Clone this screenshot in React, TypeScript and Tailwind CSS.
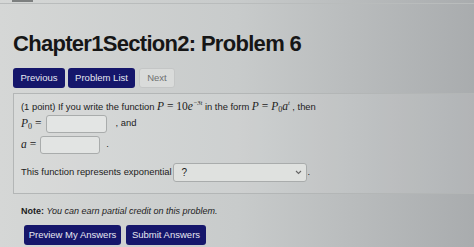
import React from 'react';

const navBtn =
  'h-[20px] rounded-[3px] bg-[#15166b] text-[#e6e8f2] text-[9.5px] leading-none whitespace-nowrap flex items-center justify-center';

const serif = "font-['Liberation_Serif',serif] text-[11.5px]";

const I: React.FC<{ children: React.ReactNode }> = ({ children }) => (
  <span className={`${serif} italic`}>{children}</span>
);

const Sub0: React.FC = () => (
  <span className="font-['Liberation_Serif',serif] text-[8px] relative top-[2px]">0</span>
);

const Sup: React.FC<{ children: React.ReactNode }> = ({ children }) => (
  <span className="font-['Liberation_Serif',serif] italic text-[6.5px] relative -top-[5px]">{children}</span>
);

const App: React.FC = () => {
  return (
    <div className="w-[474px] h-[247px] overflow-hidden bg-gradient-to-r from-[#d5d7d6] via-[#c8cbcb] to-[#a9acae] font-['Liberation_Sans',Arial,sans-serif] text-[#1c1c1c]">
      <div className="h-[4px] border-b border-[#b9bcbc] flex">
        <div className="ml-[12px] w-[21px] h-[2px] bg-[#7d8080]" />
      </div>

      <div className="pl-[13px]">
        <h1 className="mt-[29px] text-[22px] leading-none font-semibold tracking-[-0.7px] text-[#161616]">
          Chapter1Section2: Problem 6
        </h1>

        <div className="mt-[13px] flex gap-[3px]">
          <button className={`${navBtn} w-[52px]`}>Previous</button>
          <button className={`${navBtn} w-[67px]`}>Problem List</button>
          <button className="h-[20px] w-[36px] ml-[1px] rounded-[3px] bg-[#d9dbda] border border-[#c4c6c6] text-[#6e7070] text-[9.5px] leading-none flex items-center justify-center">
            Next
          </button>
        </div>

        <div className="mt-[5px] h-[101px] border border-r-0 border-[#b3b6b6] bg-white/10 pl-[7px] pt-[6px] text-[9.4px]">
          <div className="h-[13px] leading-[13px] whitespace-nowrap">
            (1 point) If you write the function <I>P</I>
            <span className={serif}> = 10</span>
            <I>e</I>
            <Sup>−3t</Sup> in the form <I>P</I>
            <span className={serif}> = </span>
            <I>P</I>
            <Sub0 />
            <I>a</I>
            <Sup>t</Sup> , then
          </div>

          <div className="mt-[1px] flex items-center h-[19px]">
            <span className="leading-none">
              <I>P</I>
              <Sub0 />
            </span>
            <span className={`${serif} ml-[3px]`}>=</span>
            <div className="ml-[4px] w-[61px] h-[18px] rounded-[3px] border border-[#a9acac] bg-[#e3e5e4]" />
            <span className="ml-[9px]">, and</span>
          </div>

          <div className="mt-[2px] flex items-center h-[19px]">
            <I>a</I>
            <span className={`${serif} ml-[3px]`}>=</span>
            <div className="ml-[4px] w-[60px] h-[18px] rounded-[3px] border border-[#a9acac] bg-[#e2e4e3]" />
            <span className="ml-[6px]">.</span>
          </div>

          <div className="mt-[9px] flex items-center h-[19px]">
            <span>This function represents exponential</span>
            <div className="ml-[1px] w-[134px] h-[19px] rounded-[3px] border border-[#a9acac] bg-[#dfe1df] flex items-center justify-between pl-[8px] pr-[4px]">
              <span className="text-[10px]">?</span>
              <svg width="7" height="5" viewBox="0 0 7 5">
                <path d="M1 1 L3.5 3.5 L6 1" fill="none" stroke="#666" strokeWidth="1.1" />
              </svg>
            </div>
            <span className="ml-[1px]">.</span>
          </div>
        </div>

        <div className="mt-[13px] pl-[8px] text-[9px] leading-none">
          <span className="font-bold">Note:</span>{' '}
          <span className="italic">You can earn partial credit on this problem.</span>
        </div>

        <div className="mt-[9px] pl-[11px] flex gap-[5px]">
          <button className={`${navBtn} h-[19px] w-[97px]`}>Preview My Answers</button>
          <button className={`${navBtn} h-[19px] w-[80px]`}>Submit Answers</button>
        </div>
      </div>
    </div>
  );
};

export default App;
